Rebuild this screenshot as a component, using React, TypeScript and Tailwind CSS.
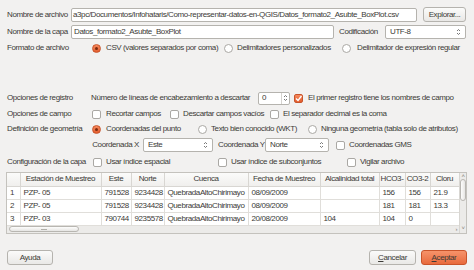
import React from 'react';

const Radio = ({ checked = false }: { checked?: boolean }) => (
  <span
    className={`w-[9px] h-[9px] rounded-full border flex items-center justify-center shrink-0 ${
      checked
        ? 'bg-linear-to-b from-[#f68a5e] to-[#e35c2c] border-[#c8542b]'
        : 'bg-white border-[#aaa8a4]'
    }`}
  >
    {checked && <span className="w-[3px] h-[3px] rounded-full bg-[#7a2a10]" />}
  </span>
);

const Check = ({ checked = false }: { checked?: boolean }) => (
  <span
    className={`w-[9px] h-[9px] rounded-[2px] border shrink-0 flex items-center justify-center ${
      checked
        ? 'bg-linear-to-b from-[#f68a5e] to-[#e35c2c] border-[#c8542b]'
        : 'bg-white border-[#aaa8a4]'
    }`}
  >
    {checked && (
      <svg width="7" height="7" viewBox="0 0 7 7">
        <path d="M1 3.5 L3 5.5 L6.5 1" stroke="#fff" strokeWidth="1.4" fill="none" />
      </svg>
    )}
  </span>
);

const UpDown = () => (
  <svg width="5" height="8" viewBox="0 0 5 8">
    <path d="M1 3 L2.5 1.5 L4 3 M1 5 L2.5 6.5 L4 5" stroke="#6a6a6a" fill="none" strokeWidth="0.9" />
  </svg>
);

const Select = ({ value, className }: { value: string; className: string }) => (
  <div
    className={`h-[14px] bg-white border border-[#b5b3ae] rounded-[2px] flex items-center justify-between pl-[4px] pr-[4px] ${className}`}
  >
    <span>{value}</span>
    <UpDown />
  </div>
);

const cols = [13, 81, 30, 33, 84, 72, 59, 26, 25, 29];
const headers = ['', 'Estación de Muestreo', 'Este', 'Norte', 'Cuenca', 'Fecha de Muestreo', 'Alcalinidad total', 'HCO3-', 'CO3-2', 'Cloru'];
const rows = [
  ['1', 'PZP- 05', '791528', '9234428', 'QuebradaAltoChirimayo', '08/09/2009', '', '156', '156', '21.9'],
  ['2', 'PZP- 05', '791528', '9234428', 'QuebradaAltoChirimayo', '08/09/2009', '', '181', '181', '13.3'],
  ['3', 'PZP- 03', '790744', '9235578', 'QuebradaAltoChirimayo', '20/08/2009', '104', '104', '0', ''],
];

export default function App() {
  return (
    <div className="w-[474px] h-[270px] bg-[#f2f1f0] text-[#3c3b37] text-[8px] tracking-[-0.4px] leading-none whitespace-nowrap font-['Liberation_Sans',sans-serif] flex flex-col overflow-hidden">
      {/* Nombre de archivo */}
      <div className="mt-[7px] h-[15px] flex items-center pl-[7px]">
        <span className="w-[64px] shrink-0">Nombre de archivo</span>
        <div className="w-[346px] h-[14px] bg-white border border-[#b5b3ae] rounded-[2px] flex items-center pl-[1px] overflow-hidden">
          a3pc/Documentos/Infohataris/Como-representar-datos-en-QGIS/Datos_formato2_Asubte_BoxPlot.csv
        </div>
        <button className="ml-[6px] w-[43px] h-[15px] rounded-[3px] border border-[#b5b3ae] bg-linear-to-b from-[#fbfbfa] to-[#e9e8e6] flex items-center justify-center">
          Explorar...
        </button>
      </div>

      {/* Nombre de la capa */}
      <div className="mt-[3px] h-[14px] flex items-center pl-[7px]">
        <span className="w-[64px] shrink-0">Nombre de la capa</span>
        <div className="w-[263px] h-[14px] bg-white border border-[#b5b3ae] rounded-[2px] flex items-center pl-[2px]">
          Datos_formato2_Asubte_BoxPlot
        </div>
        <span className="ml-[5px] w-[46px]">Codificación</span>
        <Select value="UTF-8" className="w-[81px]" />
      </div>

      {/* Formato de archivo */}
      <div className="mt-[2px] h-[14px] flex items-center pl-[7px]">
        <span className="w-[85px] shrink-0">Formato de archivo</span>
        <div className="w-[132px] flex items-center gap-[5px]">
          <Radio checked />
          <span>CSV (valores separados por coma)</span>
        </div>
        <div className="w-[118px] flex items-center gap-[4px]">
          <Radio />
          <span>Delimitadores personalizados</span>
        </div>
        <div className="flex items-center gap-[6px]">
          <Radio />
          <span>Delimitador de expresión regular</span>
        </div>
      </div>

      {/* Opciones de registro */}
      <div className="mt-[36px] h-[14px] flex items-center pl-[7px]">
        <span className="w-[84px] shrink-0">Opciones de registro</span>
        <span className="w-[167px]">Número de líneas de encabezamiento a descartar</span>
        <div className="w-[32px] h-[13px] bg-white border border-[#b5b3ae] rounded-[2px] flex items-center">
          <span className="flex-1 pl-[3px]">0</span>
          <div className="w-[8px] h-full border-l border-[#d5d3cf] flex items-center justify-center">
            <UpDown />
          </div>
        </div>
        <div className="ml-[4px] flex items-center gap-[5px]">
          <Check checked />
          <span>El primer registro tiene los nombres de campo</span>
        </div>
      </div>

      {/* Opciones de campo */}
      <div className="mt-[2px] h-[14px] flex items-center pl-[7px]">
        <span className="w-[85px] shrink-0">Opciones de campo</span>
        <div className="w-[78px] flex items-center gap-[5px]">
          <Check />
          <span>Recortar campos</span>
        </div>
        <div className="w-[100px] flex items-center gap-[4px]">
          <Check />
          <span>Descartar campos vacíos</span>
        </div>
        <div className="flex items-center gap-[4px]">
          <Check />
          <span>El separador decimal es la coma</span>
        </div>
      </div>

      {/* Definición de geometría */}
      <div className="mt-[1px] h-[14px] flex items-center pl-[7px]">
        <span className="w-[85px] shrink-0">Definición de geometría</span>
        <div className="w-[106px] flex items-center gap-[5px]">
          <Radio checked />
          <span>Coordenadas del punto</span>
        </div>
        <div className="w-[110px] flex items-center gap-[4px]">
          <Radio />
          <span>Texto bien conocido (WKT)</span>
        </div>
        <div className="flex items-center gap-[4px]">
          <Radio />
          <span>Ninguna geometría (tabla solo de atributos)</span>
        </div>
      </div>

      {/* Coordenadas */}
      <div className="mt-[2px] h-[14px] flex items-center pl-[87px]">
        <span className="w-[56px] text-right pr-[4px]">Coordenada X</span>
        <Select value="Este" className="w-[70px]" />
        <span className="ml-[5px] w-[47px]">Coordenada Y</span>
        <Select value="Norte" className="w-[64px]" />
        <div className="ml-[7px] flex items-center gap-[4px]">
          <Check />
          <span>Coordenadas GMS</span>
        </div>
      </div>

      {/* Configuración de la capa */}
      <div className="mt-[3px] h-[14px] flex items-center pl-[7px]">
        <span className="w-[86px] shrink-0">Configuración de la capa</span>
        <div className="w-[125px] flex items-center gap-[4px]">
          <Check />
          <span>Usar índice espacial</span>
        </div>
        <div className="w-[129px] flex items-center gap-[4px]">
          <Check />
          <span>Usar índice de subconjuntos</span>
        </div>
        <div className="flex items-center gap-[4px]">
          <Check />
          <span>Vigilar archivo</span>
        </div>
      </div>

      {/* Table */}
      <div className="mt-[3px] ml-[6px] w-[461px] h-[62px] border border-[#c4c2bd] bg-white flex">
        <div className="w-[452px] flex flex-col">
          <table className="table-fixed border-collapse w-[452px]">
            <colgroup>
              {cols.map((w, i) => (
                <col key={i} style={{ width: w }} />
              ))}
            </colgroup>
            <thead>
              <tr className="h-[13px] bg-linear-to-b from-[#fbfbfa] to-[#f0efed]">
                {headers.map((h, i) => (
                  <th
                    key={i}
                    className="font-normal text-center border-r border-b border-[#d8d6d2] overflow-hidden p-0"
                  >
                    {h}
                  </th>
                ))}
              </tr>
            </thead>
            <tbody>
              {rows.map((r, ri) => (
                <tr key={ri} className="h-[13px]">
                  {r.map((c, ci) => (
                    <td
                      key={ci}
                      className="border-r border-b border-[#e0deda] overflow-hidden pl-[3px] py-0"
                    >
                      {c}
                    </td>
                  ))}
                </tr>
              ))}
            </tbody>
          </table>
          {/* horizontal scrollbar */}
          <div className="h-[8px] mt-auto bg-[#ecebe9] flex items-center px-[2px]">
            <div className="w-[70px] h-[6px] rounded-full border border-[#b8b6b1] bg-linear-to-b from-[#fdfdfc] to-[#e6e5e3] flex items-center justify-center">
              <span className="w-[6px] h-px bg-[#b0aea9]" />
            </div>
            <span className="ml-auto text-[6px] text-[#7a7873]">›</span>
          </div>
        </div>
        {/* vertical scrollbar */}
        <div className="w-[7px] bg-[#ecebe9] border-l border-[#d8d6d2] flex flex-col items-center">
          <span className="text-[6px] text-[#7a7873] leading-none">˄</span>
          <div className="w-[6px] h-[22px] rounded-full border border-[#b8b6b1] bg-linear-to-r from-[#fdfdfc] to-[#e6e5e3]" />
          <span className="mt-auto text-[6px] text-[#7a7873] leading-none mb-[2px]">˅</span>
        </div>
      </div>

      {/* Buttons */}
      <div className="mt-[16px] h-[15px] flex items-center pl-[7px] pr-[7px]">
        <button className="w-[46px] h-[15px] rounded-[3px] border border-[#b5b3ae] bg-linear-to-b from-[#fbfbfa] to-[#e9e8e6] flex items-center justify-center">
          Ayuda
        </button>
        <button className="ml-auto w-[47px] h-[15px] rounded-[3px] border border-[#b5b3ae] bg-linear-to-b from-[#fbfbfa] to-[#e9e8e6] flex items-center justify-center">
          <span><u>C</u>ancelar</span>
        </button>
        <button className="ml-[5px] w-[46px] h-[15px] rounded-[3px] border border-[#c9542a] bg-linear-to-b from-[#f6936a] to-[#e86a3c] flex items-center justify-center">
          <span><u>A</u>ceptar</span>
        </button>
      </div>
    </div>
  );
}
